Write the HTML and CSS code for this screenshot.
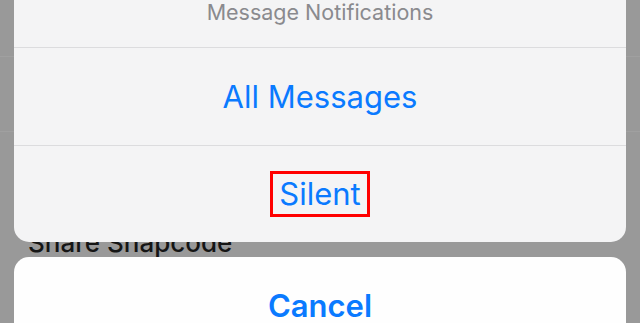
FILE: index.html
```html
<!DOCTYPE html>
<html lang="en">
<head>
<meta charset="utf-8">
<title>Message Notifications</title>
<link rel="stylesheet" href="styles.css">
</head>
<body>
<div class="screen">
  <div class="under">
    <div class="under-sep sep-a"></div>
    <div class="under-sep sep-b"></div>
    <div class="under-label">Share Snapcode</div>
  </div>
  <div class="sheets">
    <div class="group">
      <div class="group-title">Message Notifications</div>
      <div class="action">All Messages</div>
      <div class="action last"><span class="hl">Silent</span></div>
    </div>
    <div class="cancel">Cancel</div>
  </div>
</div>
</body>
</html>
```
FILE: styles.css
```css
html, body {
  margin: 0;
  padding: 0;
}
body {
  width: 640px;
  height: 323px;
  overflow: hidden;
  background: #999999;
  font-family: Inter, "Noto Sans", "Liberation Sans", sans-serif;
}
.screen {
  position: relative;
  width: 640px;
  height: 323px;
  overflow: hidden;
}
.under {
  position: absolute;
  inset: 0;
}
.under-sep {
  position: absolute;
  left: 0;
  right: 0;
  height: 1px;
  background: #a0a0a0;
}
.sep-a { top: 56px; }
.sep-b { top: 131px; }
.under-label {
  position: absolute;
  left: 28px;
  top: 227px;
  font-size: 26px;
  line-height: 32px;
  font-weight: 500;
  color: #151515;
}
.sheets {
  position: relative;
  z-index: 1;
  display: flex;
  flex-direction: column;
  gap: 15px;
  padding: 0 14px;
}
.group {
  background: #f4f4f5;
  border-radius: 0 0 15px 15px;
  display: flex;
  flex-direction: column;
  overflow: hidden;
}
.group-title {
  height: 48px;
  box-sizing: border-box;
  line-height: 24px;
  font-size: 21.5px;
  color: #8a8a8e;
  text-align: center;
  border-bottom: 1px solid #dcdcde;
}
.action {
  height: 97px;
  display: flex;
  align-items: center;
  justify-content: center;
  font-size: 31px;
  color: #0a7aff;
  border-bottom: 1px solid #dcdcde;
}
.action.last {
  height: 96px;
  border-bottom: none;
}
.hl {
  display: inline-block;
  line-height: 34px;
  padding: 3px 6px;
  border: 3px solid #ff0000;
}
.cancel {
  height: 96px;
  background: #fefefe;
  border-radius: 15px;
  display: flex;
  align-items: center;
  justify-content: center;
  font-size: 31px;
  font-weight: 600;
  color: #0a7aff;
}
```
